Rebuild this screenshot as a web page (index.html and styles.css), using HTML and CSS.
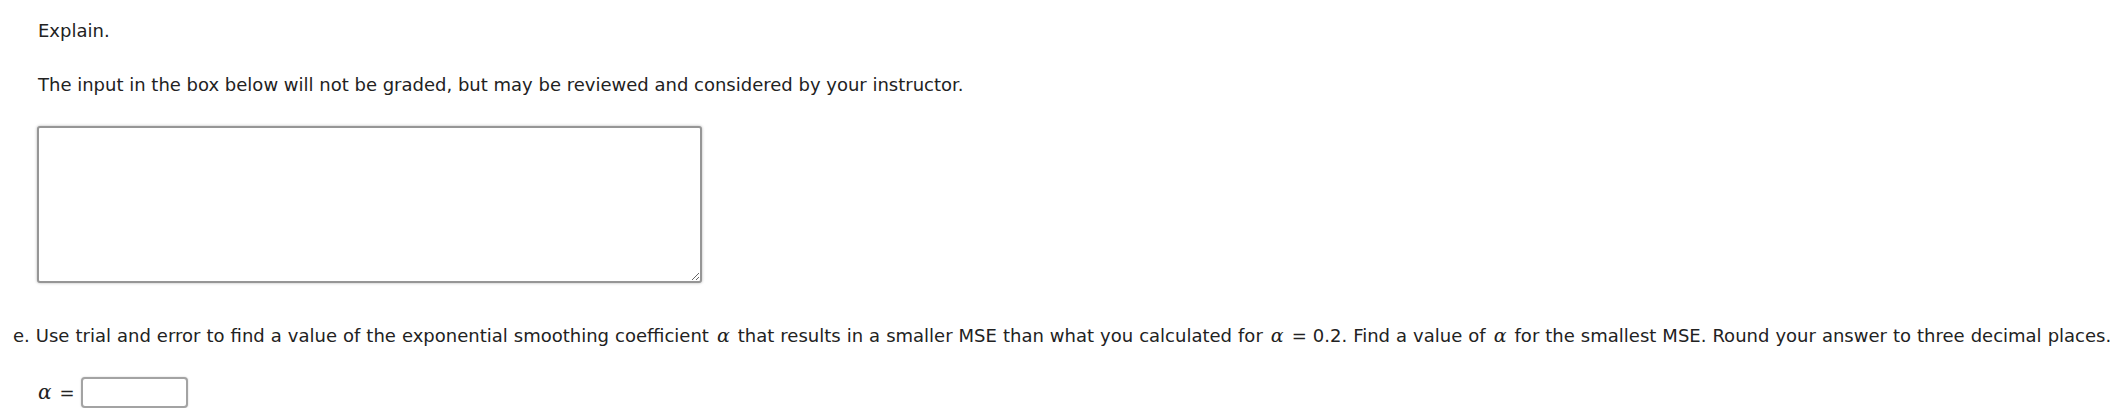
FILE: index.html
```html
<!DOCTYPE html>
<html lang="en">
<head>
<meta charset="utf-8">
<title>Exponential smoothing</title>
<link rel="stylesheet" href="styles.css">
</head>
<body>
<main class="page">
  <section class="part">
    <p class="explain">Explain.</p>
    <p class="note">The input in the box below will not be graded, but may be reviewed and considered by your instructor.</p>
    <textarea class="answer-box" aria-label="Explanation"></textarea>
  </section>
  <section class="question">
    <p class="prompt">e. Use trial and error to find a value of the exponential smoothing coefficient <span class="math">α</span> that results in a smaller MSE than what you calculated for <span class="math">α</span> = 0.2. Find a value of <span class="math">α</span> for the smallest MSE. Round your answer to three decimal places.</p>
    <div class="answer-row">
      <span class="math big">α</span>
      <span class="eq">=</span>
      <input class="answer-input" type="text" aria-label="alpha">
    </div>
  </section>
</main>
</body>
</html>
```
FILE: styles.css
```css
html, body {
  margin: 0;
  padding: 0;
  background: #ffffff;
}

.page {
  font-family: Verdana, "DejaVu Sans", sans-serif;
  font-size: 18px;
  line-height: 21px;
  color: #222222;
  padding-top: 20px;
}

.part {
  padding-left: 38px;
}

.explain {
  margin: 0;
}

.note {
  margin: 33px 0 0 0;
}

.answer-box {
  display: block;
  box-sizing: border-box;
  margin: 31px 0 0 -1px;
  width: 665px;
  height: 157px;
  border: 2px solid #969696;
  border-radius: 3px;
  box-shadow: 0 0 3px rgba(0, 0, 0, 0.3);
  background: #ffffff;
  font: inherit;
  padding: 4px;
}

.question {
  padding-left: 13px;
}

.prompt {
  margin: 42px 0 0 0;
  white-space: nowrap;
  word-spacing: 0.3px;
}

.math {
  font-family: "DejaVu Serif", "Liberation Serif", serif;
  font-style: italic;
  font-size: 19px;
  padding: 0 2px;
}

.answer-row {
  display: flex;
  align-items: center;
  margin-top: 31px;
  padding-left: 25px;
  height: 31px;
}

.big {
  font-size: 20px;
  padding: 0;
}

.eq {
  margin-left: 8px;
}

.answer-input {
  box-sizing: border-box;
  width: 107px;
  height: 31px;
  margin-left: 6px;
  border: 2px solid #a3a3a3;
  border-radius: 4px;
  box-shadow: 0 0 2px rgba(0, 0, 0, 0.2);
  background: #ffffff;
  font: inherit;
}
```
